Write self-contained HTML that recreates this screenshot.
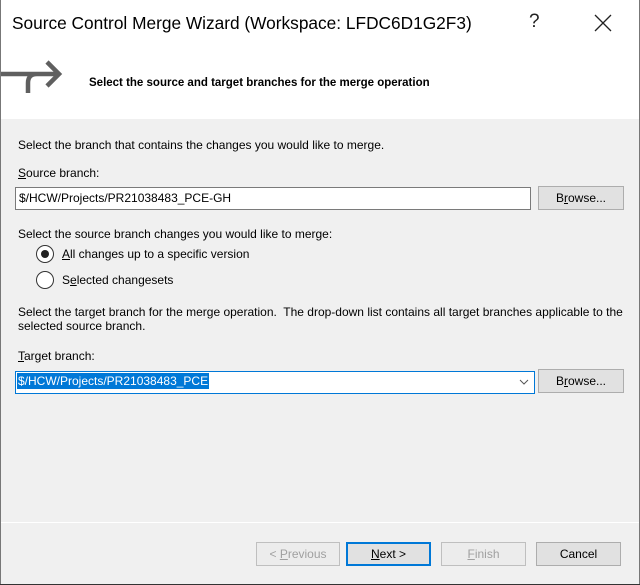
<!DOCTYPE html>
<html><head><meta charset="utf-8"><style>
*{margin:0;padding:0;box-sizing:border-box}
body{width:640px;height:585px;position:relative;overflow:hidden;background:#f0f0f0;font-family:"Liberation Sans",sans-serif;font-size:12px;color:#000}
.a{position:absolute;white-space:nowrap}
.top{position:absolute;left:0;top:0;width:640px;height:119px;background:#fff}
.btn{position:absolute;height:24px;background:#e1e1e1;border:1px solid #adadad;text-align:center;line-height:22px}
.dis{color:#a0a0a0;border-color:#bfbfbf;background:#ececec}
u{text-decoration:underline}
.radio{position:absolute;width:18px;height:18px;border:1px solid #333;border-radius:50%;background:#fff}
</style></head><body>
<div class="top"></div>
<div class="a" style="left:12px;top:13px;font-size:17.3px;color:#000">Source Control Merge Wizard (Workspace: LFDC6D1G2F3)</div>
<div class="a" style="left:529px;top:11px;font-size:19px;color:#222">?</div>
<svg class="a" style="left:594px;top:14px" width="18" height="18"><path d="M1 1L17 17M17 1L1 17" stroke="#222" stroke-width="1.3"/></svg>
<svg class="a" style="left:0;top:55px" width="70" height="45"><path d="M0 19H60M47 7L59 19L47 31M28 38V28Q28 19 37 19" fill="none" stroke="#5f5f5f" stroke-width="4.5"/></svg>
<div class="a" style="left:89px;top:77px;font-weight:bold;font-size:11.5px">Select the source and target branches for the merge operation</div>
<div style="position:absolute;left:0;top:0;width:1px;height:585px;background:#777"></div>
<div style="position:absolute;right:0;top:0;width:1px;height:585px;background:#777"></div>
<div style="position:absolute;left:0;bottom:0;width:640px;height:1px;background:#333"></div>
<div style="position:absolute;left:1px;top:522px;width:638px;height:1px;background:#fff"></div>
<div class="a" style="left:18px;top:138px">Select the branch that contains the changes you would like to merge.</div>
<div class="a" style="left:18px;top:166px"><u>S</u>ource branch:</div>
<div class="a" style="left:15px;top:187px;width:516px;height:23px;background:#fff;border:1px solid #7a7a7a;padding:3px 3px">$/HCW/Projects/PR21038483_PCE-GH</div>
<div class="btn" style="left:538px;top:186px;width:86px">B<u>r</u>owse...</div>
<div class="a" style="left:18px;top:227px">Select the source branch changes you would like to merge:</div>
<div class="radio" style="left:36px;top:245px"><div style="position:absolute;left:4px;top:4px;width:8px;height:8px;border-radius:50%;background:#222"></div></div>
<div class="a" style="left:62px;top:247px"><u>A</u>ll changes up to a specific version</div>
<div class="radio" style="left:36px;top:271px"></div>
<div class="a" style="left:62px;top:273px">S<u>e</u>lected changesets</div>
<div class="a" style="left:18px;top:305px">Select the target branch for the merge operation.&nbsp; The drop-down list contains all target branches applicable to the</div>
<div class="a" style="left:18px;top:319px">selected source branch.</div>
<div class="a" style="left:18px;top:349px"><u>T</u>arget branch:</div>
<div class="a" style="left:15px;top:371px;width:520px;height:23px;background:#fff;border:1px solid #0078d7;padding:2px 1px"><span style="background:#0078d7;color:#fff;padding:1px 1px">$/HCW/Projects/PR21038483_PCE</span></div>
<svg class="a" style="left:519px;top:378px" width="10" height="8"><path d="M1 2L5 6L9 2" fill="none" stroke="#555"/></svg>
<div class="btn" style="left:538px;top:369px;width:86px">B<u>r</u>owse...</div>
<div class="btn dis" style="left:256px;top:542px;width:84px">&lt; <u>P</u>revious</div>
<div class="btn" style="left:346px;top:542px;width:85px;border:2px solid #0078d7;line-height:20px"><u>N</u>ext &gt;</div>
<div class="btn dis" style="left:441px;top:542px;width:85px"><u>F</u>inish</div>
<div class="btn" style="left:536px;top:542px;width:85px">Cancel</div>
</body></html>
